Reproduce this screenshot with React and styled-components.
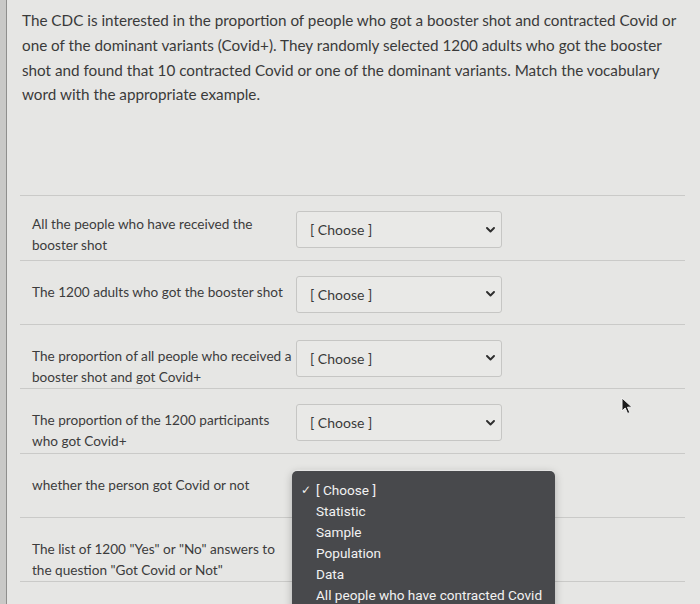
import React from "react";
import styled, { createGlobalStyle } from "styled-components";

const GlobalStyle = createGlobalStyle`
  html, body {
    margin: 0;
    padding: 0;
    background: #e4e4e2;
  }
  body {
    font-family: Lato, "Open Sans", "Liberation Sans", sans-serif;
  }
`;

const Screen = styled.div`
  position: relative;
  display: flex;
  width: 700px;
  height: 604px;
  overflow: hidden;
`;

const LeftEdge = styled.div`
  width: 6px;
  background: #c9c9c7;
  border-right: 1px solid #8f8f8d;
`;

const Panel = styled.div`
  flex: 1;
  background: #e6e6e4;
  padding: 8px 15px 0 15px;
`;

const Question = styled.p`
  margin: 0 0 88px 0;
  font-size: 15.25px;
  line-height: 24.8px;
  color: #3a3a3a;
`;

const AnswerList = styled.div`
  margin-left: -2px;
`;

const AnswerRow = styled.div`
  display: grid;
  grid-template-columns: 264px 206px;
  align-items: start;
  height: 64.4px;
  padding-left: 12px;
  border-top: 1px solid #cacac8;
  box-sizing: border-box;
  &:last-child {
    border-bottom: 1px solid #cacac8;
  }
`;

const Label = styled.div`
  margin-top: ${(p) => (p.$first ? "18px" : "21px")};
  font-size: 13.6px;
  line-height: 21px;
  color: #3c3c3c;
`;

const SelectCell = styled.div`
  position: relative;
  margin-top: 15px;
`;

const SelectBox = styled.div`
  display: flex;
  align-items: center;
  justify-content: space-between;
  height: 37px;
  box-sizing: border-box;
  padding: 0 6px 0 13px;
  border: 1px solid ${(p) => (p.$open ? "transparent" : "#c6c6c4")};
  border-radius: 3px;
  background: #e9e9e7;
  font-size: 14px;
  color: #3a3a3a;
  & > * {
    visibility: ${(p) => (p.$open ? "hidden" : "visible")};
  }
`;

const Menu = styled.div`
  position: absolute;
  top: 2px;
  left: -4px;
  width: 263px;
  padding: 9px 0 6px;
  background: #48494c;
  border-radius: 5px;
  box-shadow: 0 -1px 0 rgba(255, 255, 255, 0.35), 0 2px 8px rgba(0, 0, 0, 0.25);
  z-index: 2;
`;

const MenuItem = styled.div`
  display: flex;
  align-items: center;
  height: 21px;
  padding-left: 9px;
  font-family: Roboto, Inter, "Liberation Sans", sans-serif;
  font-size: 13.6px;
  color: #f2f2f2;
  white-space: nowrap;
`;

const Check = styled.span`
  display: inline-block;
  flex: none;
  width: 15px;
  overflow: hidden;
  font-family: "DejaVu Sans", sans-serif;
  font-size: 12px;
  line-height: 21px;
`;

const Cursor = styled.svg`
  position: absolute;
  left: 621px;
  top: 397px;
`;

const Chevron = () => (
  <svg width="9" height="6" viewBox="0 0 9 6">
    <polyline
      points="1,1 4.5,4.5 8,1"
      fill="none"
      stroke="#2e2e2e"
      strokeWidth="1.9"
      strokeLinecap="round"
      strokeLinejoin="round"
    />
  </svg>
);

const options = [
  "Statistic",
  "Sample",
  "Population",
  "Data",
  "All people who have contracted Covid",
];

const rows = [
  "All the people who have received the booster shot",
  "The 1200 adults who got the booster shot",
  "The proportion of all people who received a booster shot and got Covid+",
  "The proportion of the 1200 participants who got Covid+",
  "whether the person got Covid or not",
  'The list of 1200 "Yes" or "No" answers to the question "Got Covid or Not"',
];

export default function App() {
  return (
    <Screen>
      <GlobalStyle />
      <LeftEdge />
      <Panel>
        <Question>
          The CDC is interested in the proportion of people who got a booster
          shot and contracted Covid or one of the dominant variants (Covid+).
          They randomly selected 1200 adults who got the booster shot and found
          that 10 contracted Covid or one of the dominant variants. Match the
          vocabulary word with the appropriate example.
        </Question>
        <AnswerList>
          {rows.map((text, i) => (
            <AnswerRow key={i}>
              <Label $first={i === 0}>{text}</Label>
              {i < 5 ? (
                <SelectCell>
                  <SelectBox $open={i === 4}>
                    <span>[ Choose ]</span>
                    <Chevron />
                  </SelectBox>
                  {i === 4 && (
                    <Menu>
                      <MenuItem>
                        <Check>✓</Check>
                        <span>[ Choose ]</span>
                      </MenuItem>
                      {options.map((o) => (
                        <MenuItem key={o}>
                          <Check />
                          <span>{o}</span>
                        </MenuItem>
                      ))}
                    </Menu>
                  )}
                </SelectCell>
              ) : (
                <div />
              )}
            </AnswerRow>
          ))}
        </AnswerList>
      </Panel>
      <Cursor width="14" height="18" viewBox="0 0 14 18">
        <path
          d="M1 1 L1 14 L4.2 11 L6.6 16.5 L8.8 15.5 L6.5 10.2 L11 10.2 Z"
          fill="#1c1c1c"
          stroke="#f4f4f4"
          strokeWidth="1"
          strokeLinejoin="round"
        />
      </Cursor>
    </Screen>
  );
}
